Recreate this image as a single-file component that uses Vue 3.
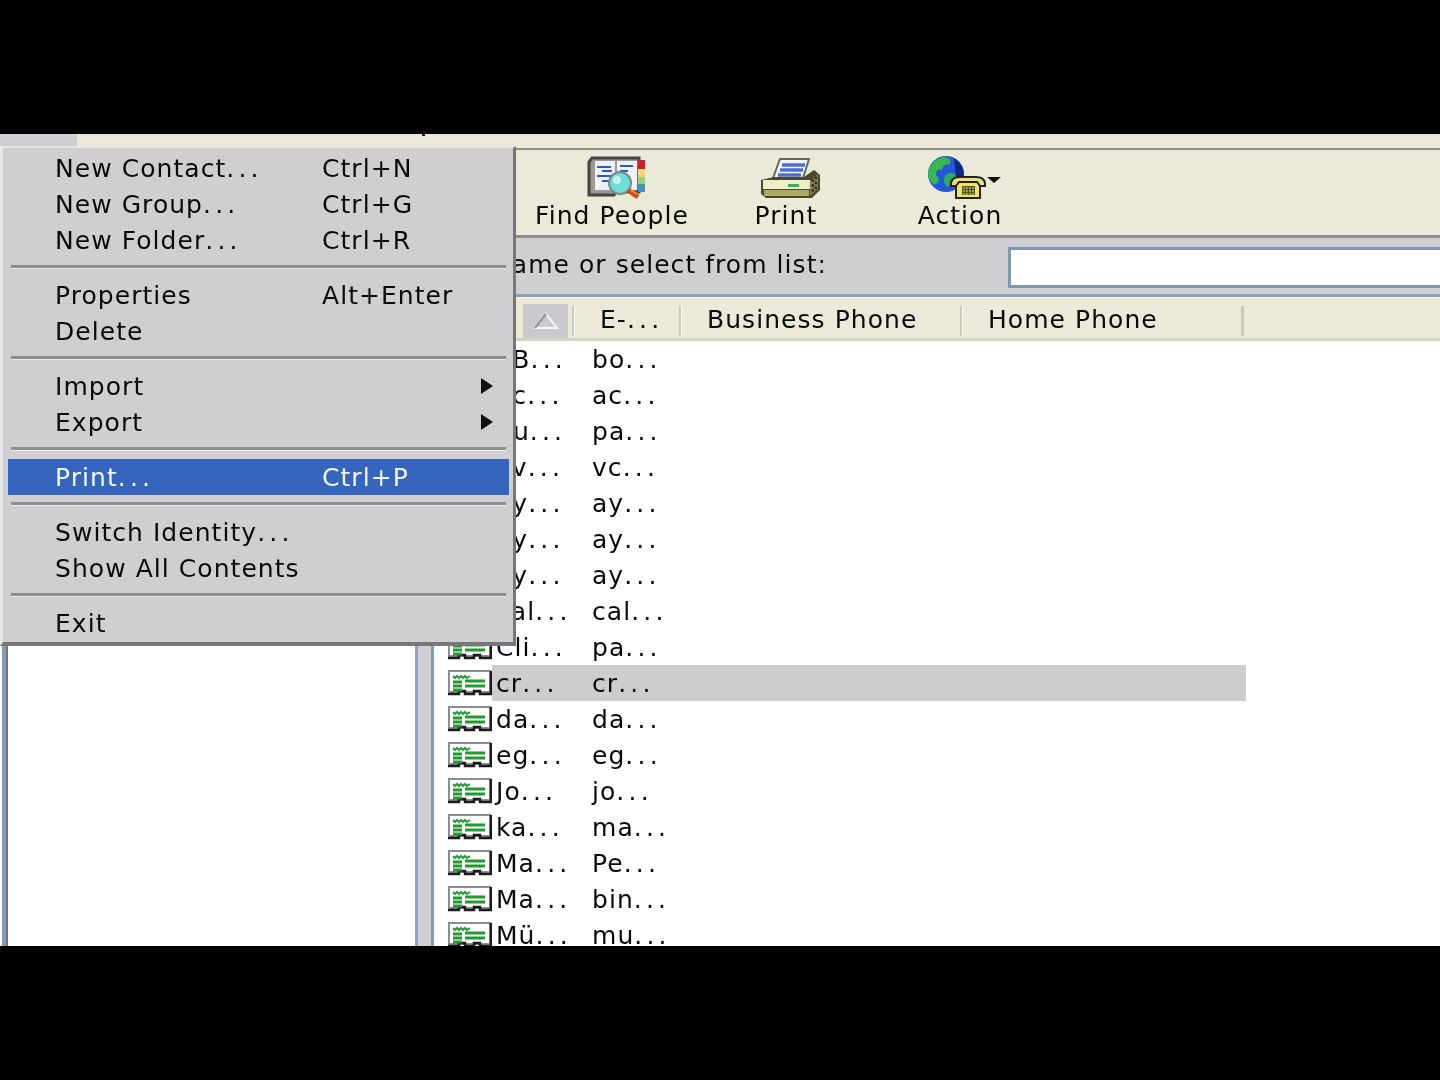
<script setup>
const menuGroups = [
  [
    { label: 'New Contact', dots: '...', key: 'Ctrl+N' },
    { label: 'New Group', dots: '...', key: 'Ctrl+G' },
    { label: 'New Folder', dots: '...', key: 'Ctrl+R' }
  ],
  [
    { label: 'Properties', dots: '', key: 'Alt+Enter' },
    { label: 'Delete', dots: '', key: '' }
  ],
  [
    { label: 'Import', dots: '', key: '', sub: true },
    { label: 'Export', dots: '', key: '', sub: true }
  ],
  [{ label: 'Print', dots: '...', key: 'Ctrl+P', active: true }],
  [
    { label: 'Switch Identity', dots: '...', key: '' },
    { label: 'Show All Contents', dots: '', key: '' }
  ],
  [{ label: 'Exit', dots: '', key: '' }]
]

const rows = [
  ['aB', 'bo'],
  ['ac', 'ac'],
  ['pu', 'pa'],
  ['vv', 'vc'],
  ['ay', 'ay'],
  ['ay', 'ay'],
  ['ay', 'ay'],
  ['cal', 'cal'],
  ['Cli', 'pa'],
  ['cr', 'cr', true],
  ['da', 'da'],
  ['eg', 'eg'],
  ['Jo', 'jo'],
  ['ka', 'ma'],
  ['Ma', 'Pe'],
  ['Ma', 'bin'],
  ['Mü', 'mu']
]
</script>

<template>
  <div class="screen">
    <div class="bar"></div>
    <div class="window">
      <div class="menubar">
        <div class="file-tab"></div>
        <div class="tick"></div>
      </div>

      <div class="toolbar">
        <div class="tool">
          <svg class="tool-icon" width="68" height="44" viewBox="0 0 68 44">
            <path d="M14 2H61V36H38L36 39H11V6Z" fill="#9b9b96" stroke="#454545" stroke-width="3" />
            <rect x="17" y="5" width="20" height="29" fill="#eef1f8" />
            <rect x="39" y="5" width="20" height="29" fill="#eef1f8" />
            <path d="M19 11H33M24 15H34M19 20H34M24 25H33M42 10H55M42 15H50M42 20H47" stroke="#2f57c0" stroke-width="2" />
            <rect x="60" y="4" width="7" height="9" fill="#c8202e" />
            <rect x="60" y="13" width="7" height="8" fill="#f0d878" />
            <rect x="60" y="21" width="7" height="7" fill="#9ccf7a" />
            <rect x="60" y="28" width="7" height="8" fill="#4a90b8" />
            <circle cx="42" cy="27" r="11" fill="#6fded8" stroke="#7a8a8a" stroke-width="2" />
            <circle cx="39" cy="24" r="4" fill="#c4f4f0" />
            <path d="M50 34L60 41" stroke="#d8481a" stroke-width="5" />
            <path d="M53 34L59 38" stroke="#f0a020" stroke-width="2" />
          </svg>
          <span>Find People</span>
        </div>

        <div class="tool">
          <svg class="tool-icon" width="68" height="44" viewBox="0 0 68 44">
            <path d="M28 3L57 3L51 22H21Z" fill="#f4f6fb" stroke="#666" stroke-width="2" />
            <path d="M30 9H53M28 14H51M26 19H49" stroke="#4a70d0" stroke-width="3.500" />
            <path d="M9 24L22 21H52L62 14L68 19V34L60 42H14L9 38Z" fill="#4a4a2a" />
            <path d="M11 24H58V33H11Z" fill="#eeeecd" />
            <path d="M12 34H57V40H12Z" fill="#a8ab62" />
            <path d="M58 25L66 18V33L58 40Z" fill="#7f7f52" />
            <path d="M60 25L65 21M60 30L65 26M60 35L65 31" stroke="#20201a" stroke-width="2.500" stroke-dasharray="2 2" />
            <rect x="36" y="28" width="11" height="3" fill="#38b060" />
          </svg>
          <span>Print</span>
        </div>

        <div class="tool">
          <svg class="tool-icon" width="84" height="44" viewBox="0 0 84 44">
            <circle cx="28" cy="18" r="18" fill="#2558d8" />
            <path d="M36 2Q46 8 46 20L38 22Z" fill="#0c2a80" />
            <path d="M10 17Q12 5 25 1Q35 2 32 8Q24 8 24 14Q18 12 18 19Q24 23 17 29Q10 25 10 17Z" fill="#37b84c" />
            <path d="M27 20Q33 14 38 19Q36 28 29 31Q24 26 27 20Z" fill="#2fa860" />
            <path d="M33 27Q34 21 42 21H58Q66 21 67 27V30H58V26H42V30H33Z" fill="#e8e070" stroke="#222" stroke-width="2" />
            <path d="M38 30L41 26H59L62 30V42H38Z" fill="#eee568" stroke="#222" stroke-width="2" />
            <rect x="44" y="30" width="13" height="9" fill="#55552c" />
            <path d="M45 32H56M45 35H56M45 38H56" stroke="#eee568" stroke-dasharray="2 1" />
            <path d="M69 21H83L76 27Z" fill="#111" />
          </svg>
          <span>Action</span>
        </div>
      </div>

      <div class="search">
        <div class="search-label"><span>Type name or select from list:</span></div>
        <div class="search-input"></div>
      </div>

      <div class="content">
        <div class="tree"></div>
        <div class="splitter"></div>

        <div class="list">
          <div class="list-top"></div>
          <div class="list-head">
            <div class="sort-cell">
              <svg width="26" height="18" viewBox="0 0 26 18">
                <path d="M13 2L24 16H2Z" fill="none" stroke="#f7f7f7" stroke-width="2" />
                <path d="M13 2L2 16" stroke="#8a8a8a" stroke-width="2" />
              </svg>
            </div>
            <div class="head-col col-email">E-<span class="dots">...</span></div>
            <div class="head-col col-business">Business Phone</div>
            <div class="head-col col-home">Home Phone</div>
          </div>

          <div class="rows">
            <div v-for="(row, index) in rows" :key="index" class="row">
              <svg class="contact" width="45" height="26" viewBox="0 0 45 26">
                <path d="M2 1H43V22H2Z" fill="#fff" stroke="#8d8d8d" stroke-width="2" />
                <path d="M44 1V24H33V21H27V24H18V21H12V24H1" fill="none" stroke="#1c1c1c" stroke-width="2.500" />
                <path d="M6 6L8 8L10 6L12 8L14 6L16 8L18 6L20 8L23 6" fill="none" stroke="#2c9a38" stroke-width="2" />
                <path d="M6 12H15M6 16H15M6 20H15M18 11H38M18 16H38" stroke="#239a30" stroke-width="3" />
              </svg>
              <div class="cells" :class="{ selected: row[2] }">
                <span class="name">{{ row[0] }}<span class="dots">...</span></span>
                <span>{{ row[1] }}<span class="dots">...</span></span>
              </div>
            </div>
          </div>
        </div>
      </div>

      <div class="menu">
        <template v-for="(group, groupIndex) in menuGroups" :key="groupIndex">
          <div v-if="groupIndex > 0" class="menu-sep"></div>
          <div
            v-for="item in group"
            :key="item.label"
            class="menu-item"
            :class="{ active: item.active }"
          >
            <span>{{ item.label }}<span class="dots">{{ item.dots }}</span></span>
            <span>{{ item.key }}</span>
            <svg v-if="item.sub" width="12" height="16" viewBox="0 0 12 16">
              <path d="M0 0L12 8L0 16Z" fill="#111" />
            </svg>
          </div>
        </template>
      </div>
    </div>
    <div class="bar"></div>
  </div>
</template>

<style scoped>
.screen {
  display: flex;
  flex-direction: column;
  height: 1080px;
  overflow: hidden;
  background: #000;
  font-family: "DejaVu Sans", "Liberation Sans", sans-serif;
  font-size: 25px;
  letter-spacing: 1.05px;
  color: #0a0a0a;
}

.dots {
  letter-spacing: 4.2px;
}

.bar {
  flex: 0 0 134px;
  background: #000;
}

.window {
  position: relative;
  flex: 0 0 812px;
  display: flex;
  flex-direction: column;
  overflow: hidden;
  background: #ece9d8;
  filter: blur(0.45px);
}

.menubar {
  position: relative;
  flex: 0 0 14px;
  background: #ece9d8;
}

.file-tab {
  width: 77px;
  height: 14px;
  background: #cfcfd1;
}

.tick {
  position: absolute;
  top: 0;
  left: 422px;
  width: 3px;
  height: 2px;
  background: #222;
}

.toolbar {
  flex: 0 0 90px;
  box-sizing: border-box;
  display: flex;
  padding-left: 525px;
  border-top: 2px solid #8f8f8b;
  border-bottom: 3px solid #8f8f8b;
  background: #ebe9d8;
}

.tool {
  width: 174px;
  display: flex;
  flex-direction: column;
  align-items: center;
  padding-top: 6px;
  box-sizing: border-box;
}

.tool span {
  line-height: 32px;
}

.tool-icon {
  display: block;
}

.search {
  flex: 0 0 59px;
  box-sizing: border-box;
  display: flex;
  align-items: flex-start;
  padding: 9px 0 0 430px;
  background: #cfcfd2;
  border-bottom: 3px solid #8ba0b8;
}

.search-label {
  width: 397px;
  margin-right: 181px;
  display: flex;
  justify-content: flex-end;
  line-height: 36px;
  white-space: nowrap;
  overflow: hidden;
}

.search-label span {
  flex: none;
}

.search-input {
  flex: 1;
  height: 41px;
  box-sizing: border-box;
  background: #fff;
  border: 3px solid #8097b4;
  border-right: 0;
}

.content {
  flex: 1;
  min-height: 0;
  display: flex;
  background: #fff;
}

.tree {
  width: 409px;
  margin-left: 2px;
  height: 100%;
  background: #fff;
  border-left: 4px solid #7f9db9;
  box-shadow: inset 2px 0 0 #777;
}

.splitter {
  width: 19px;
  box-sizing: border-box;
  background: #cfd0d3;
  border-left: 3px solid #8fa6c2;
  border-right: 3px solid #7f9db9;
}

.list {
  flex: 1;
  min-width: 0;
  display: flex;
  flex-direction: column;
}

.list-top {
  flex: 0 0 7px;
  background: #ece9d8;
  border-top: 1px solid #f6f6f0;
  box-sizing: border-box;
}

.list-head {
  flex: 0 0 37px;
  box-sizing: border-box;
  display: flex;
  align-items: stretch;
  padding-left: 89px;
  background: #ece9d8;
  border-bottom: 3px solid #d5d2c0;
}

.sort-cell {
  width: 45px;
  flex: none;
  display: flex;
  align-items: center;
  justify-content: center;
  background: #c9cacd;
}

.head-col {
  box-sizing: border-box;
  padding-left: 28px;
  line-height: 32px;
  position: relative;
  white-space: nowrap;
}

.head-col::before {
  content: "";
  position: absolute;
  left: 0;
  top: 2px;
  bottom: 2px;
  width: 3px;
  background: #cbc9b7;
  border-right: 1px solid #fbfbf4;
  box-sizing: border-box;
}

.head-col::after {
  content: "";
  position: absolute;
  right: -3px;
  top: 2px;
  bottom: 2px;
  width: 3px;
  background: #cbc9b7;
}

.col-email {
  width: 107px;
  margin-left: 4px;
}

.col-business {
  width: 281px;
}

.col-home {
  width: 281px;
}

.rows {
  flex: 1;
  min-height: 0;
  overflow: hidden;
  padding-left: 13px;
}

.row {
  height: 36px;
  display: flex;
  align-items: center;
}

.contact {
  flex: none;
}

.cells {
  width: 754px;
  height: 36px;
  display: flex;
  align-items: center;
  padding: 1px 0 0 4px;
  box-sizing: border-box;
}

.cells.selected {
  background: #cdcdd0;
}

.name {
  width: 96px;
  flex: none;
  white-space: nowrap;
}

.menu {
  position: absolute;
  top: 12px;
  left: 0;
  width: 516px;
  height: 500px;
  box-sizing: border-box;
  padding: 2px 4px 0 5px;
  background: #cfcfd1;
  border-top: 2px solid #e4e4e4;
  border-left: 3px solid #e8e8e8;
  border-right: 3px solid #77777a;
  border-bottom: 4px solid #77777a;
}

.menu-item {
  display: grid;
  grid-template-columns: 267px 1fr auto;
  align-items: center;
  height: 36px;
  box-sizing: border-box;
  padding: 0 16px 0 47px;
  white-space: nowrap;
}

.menu-item.active {
  background: #3565bd;
  color: #f4f6fb;
}

.menu-sep {
  height: 3px;
  margin: 7px 3px 8px;
  background: #8e8e90;
  border-bottom: 1px solid #ececec;
  box-sizing: content-box;
}
</style>

<style>
html,
body {
  margin: 0;
  background: #000;
}
</style>
